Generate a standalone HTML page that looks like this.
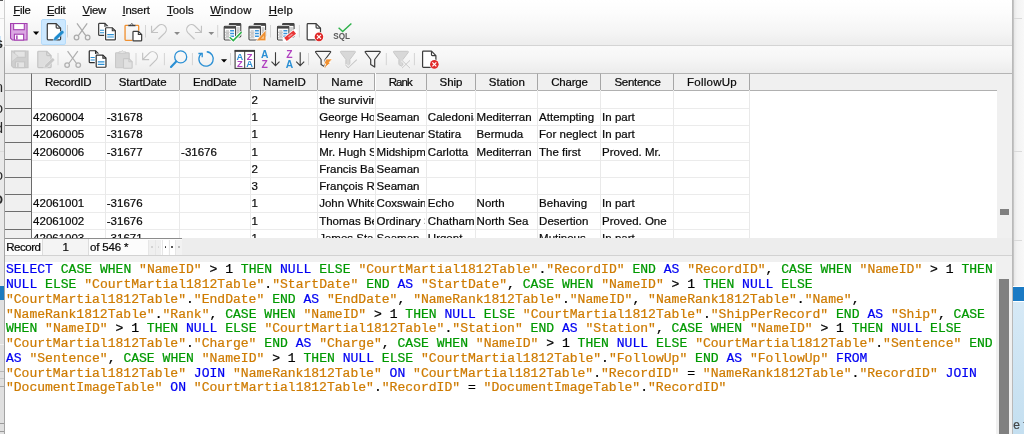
<!DOCTYPE html>
<html lang="en"><head><meta charset="utf-8"><title>Query Design</title>
<style>

html,body{margin:0;padding:0}
body{width:1024px;height:434px;overflow:hidden;position:relative;background:#fff;font-family:"Liberation Sans",sans-serif;font-size:12px;color:#0a0a0a;-webkit-text-stroke:0.22px}
div,span,svg{position:absolute;box-sizing:border-box}
.sql span,.mn u,.cell span{position:static}
#win,#lstrip,#rstrip,#tbsvg{will-change:transform}
#win{left:5px;top:0;width:1007.3px;height:434px;background:#f0f0f0;overflow:hidden}
#tb1{left:0;top:0;width:1008px;height:45px;background:linear-gradient(#ffffff,#fcfcfc 30%,#f5f5f5 70%,#ededed)}
#sep1{left:0;top:45px;width:1008px;height:1px;background:#d4d4d4}
#tb2{left:0;top:46px;width:1008px;height:27px;background:linear-gradient(#fafafa,#f6f6f6 45%,#ececec)}
.mn{top:1.5px;height:16px;line-height:16px;font-size:11.3px;white-space:nowrap;color:#111}
.mn u{text-decoration:underline;text-underline-offset:0.7px;text-decoration-thickness:1px}
.vs{width:1px;background:#d0d0d0}
#grid{left:0;top:73px;width:1008px;height:165px;background:#fff;overflow:hidden}
.hd{top:0;height:18px;background:#f0f0f0;border-top:1px solid #b4b4b4;border-bottom:1px solid #b0b0b0;border-right:1px solid #a6a6a6;font-size:11.5px;line-height:15px;white-space:nowrap}
.hd span{position:absolute;top:1.2px}
.rh{left:0;width:27px;background:#f0f0f0;border-bottom:1.2px solid #6e6e6e;border-right:1px solid #6a6a6a}
.cell{height:17.3px;line-height:17.3px;font-size:11.5px;white-space:nowrap;overflow:hidden;padding-left:1.6px}
.hl{height:1px;background:#ebebeb;left:26.5px}
.vl{width:1px;background:#e9e9e9;top:17px;height:148px}
#rec{left:0;top:238px;width:1008px;height:18.4px;background:#ededed;font-size:11.5px;line-height:18px;white-space:nowrap}
#rec span{position:absolute;top:0.1px}
#sqlp{left:0;top:261.6px;width:991px;height:173px;background:#fff;overflow:hidden}
.sql{left:0.9px;white-space:pre;font-family:"Liberation Mono",monospace;font-size:13.065px;line-height:14.75px;height:14.75px;color:#000}
.k{color:#0000f2}.i{color:#009900}.s{color:#ce7b00}

</style></head><body>
<div id="lstrip" style="left:0;top:0;width:5px;height:434px;background:#e9e9e9;overflow:hidden;font-size:16px;line-height:16px;color:#2a2a2a;white-space:nowrap">
<div style="left:0;top:0;width:5px;height:46.5px;background:#fbfbfb"></div>
<div style="left:0;top:18px;width:4px;height:1px;background:#e2e2e2"></div>
<div style="left:0;top:0;width:3px;height:1.2px;background:#555"></div>
<div style="left:0;top:35.5px;width:1.4px;height:12px;background:#cfe6f8"></div>
<span style="right:1.9px;top:34.67px;font-size:15px;font-weight:bold;line-height:16px;-webkit-text-stroke:0">s</span>
<span style="right:1.9px;top:78.67px;font-size:15px;font-weight:normal;line-height:16px;-webkit-text-stroke:0">n</span>
<span style="right:1.9px;top:100.25px;font-size:14.5px;font-weight:normal;line-height:16px;-webkit-text-stroke:0">o</span>
<span style="right:1.9px;top:119.55px;font-size:14.5px;font-weight:normal;line-height:16px;-webkit-text-stroke:0">d</span>
<span style="right:1.9px;top:166.85px;font-size:14.5px;font-weight:normal;line-height:16px;-webkit-text-stroke:0">o</span>
<span style="right:1.9px;top:192.26px;font-size:12.5px;font-weight:bold;line-height:16px;-webkit-text-stroke:0">D</span>
<span style="right:1.9px;top:353.85px;font-size:14.5px;font-weight:normal;line-height:16px;-webkit-text-stroke:0">u</span>
<div style="left:0;top:285.5px;width:4.3px;height:15.6px;background:#1a7abf"></div>
<div style="left:0;top:151px;width:4px;height:1px;background:#dcdcdc"></div>
<div style="left:0;top:300px;width:4.2px;height:134px;background:#e0e0e0"></div>
<div style="left:0;top:344.2px;width:4.2px;height:1px;background:#f2f2f2"></div>
<div style="left:0;top:371.2px;width:4.2px;height:1px;background:#b8b8b8"></div>
<div style="left:0;top:378.0px;width:4.2px;height:1px;background:#c8c8c8"></div>
<div style="left:0;top:385.6px;width:4.2px;height:1px;background:#a8a8a8"></div>
<div style="left:0;top:423.0px;width:4.2px;height:1px;background:#9a9a9a"></div>
<div style="left:0;top:430.8px;width:4.2px;height:1px;background:#9a9a9a"></div>
<div style="left:4.1px;top:46.5px;width:0.9px;height:388px;background:#a4a4a4"></div>
<div style="left:4.1px;top:0;width:0.9px;height:46.5px;background:#cfcfcf"></div>
</div>
<div id="rstrip" style="left:1012px;top:0;width:12px;height:434px;background:linear-gradient(90deg,#b9b9b9 0,#b9b9b9 1.4px,#e6e6e6 1.8px,#f3f3f3 5px,#f8f8f8 12px);overflow:hidden;font-size:12px;color:#444;white-space:nowrap">
<div style="left:1.6px;top:18px;width:8px;height:1px;background:#dadada"></div>
<div style="left:1.6px;top:151px;width:8px;height:1px;background:#dadada"></div>
<div style="left:1.6px;top:240px;width:8px;height:1px;background:#dadada"></div>
<div style="left:1px;top:285.6px;width:11px;height:16.1px;background:#1a7ac4;border-top:1px solid #fff;border-bottom:1px solid #fff"></div>
<div style="left:1px;top:301.7px;width:11px;height:133px;background:linear-gradient(#d6e9f6,#c4dff0)"></div>
<span style="left:1.2px;top:417px;line-height:16px">e f</span>
</div>
<div id="win">
<div id="tb1"></div><div id="sep1"></div><div id="tb2"></div>
<div class="mn" style="left:8.30px;letter-spacing:-0.24px"><u>F</u>ile</div>
<div class="mn" style="left:41.90px;letter-spacing:-0.28px"><u>E</u>dit</div>
<div class="mn" style="left:77.50px;letter-spacing:-0.21px"><u>V</u>iew</div>
<div class="mn" style="left:117.40px;letter-spacing:-0.14px"><u>I</u>nsert</div>
<div class="mn" style="left:161.90px;letter-spacing:0.09px"><u>T</u>ools</div>
<div class="mn" style="left:205.20px;letter-spacing:0.22px"><u>W</u>indow</div>
<div class="mn" style="left:263.75px;letter-spacing:0.27px"><u>H</u>elp</div>
<div id="grid">
<div class="hd" style="left:0;width:27px;border-right-color:#6a6a6a"></div>
<div class="hd" style="left:27.00px;width:73.70px"><span style="left:13.00px;letter-spacing:-0.29px">RecordID</span></div>
<div class="hd" style="left:100.70px;width:74.30px"><span style="left:13.05px;letter-spacing:-0.09px">StartDate</span></div>
<div class="hd" style="left:175.00px;width:70.50px"><span style="left:13.00px;letter-spacing:-0.18px">EndDate</span></div>
<div class="hd" style="left:245.50px;width:67.60px"><span style="left:12.50px;letter-spacing:0.13px">NameID</span></div>
<div class="hd" style="left:313.10px;width:57.40px"><span style="left:13.15px;letter-spacing:0.32px">Name</span></div>
<div class="hd" style="left:370.50px;width:51.25px"><span style="left:13.25px;letter-spacing:-0.95px">Rank</span></div>
<div class="hd" style="left:421.75px;width:48.75px"><span style="left:12.75px;letter-spacing:-0.04px">Ship</span></div>
<div class="hd" style="left:470.50px;width:62.50px"><span style="left:13.25px;letter-spacing:0.06px">Station</span></div>
<div class="hd" style="left:533.00px;width:63.00px"><span style="left:13.25px;letter-spacing:-0.21px">Charge</span></div>
<div class="hd" style="left:596.00px;width:73.25px"><span style="left:13.50px;letter-spacing:-0.31px">Sentence</span></div>
<div class="hd" style="left:669.25px;width:75.75px"><span style="left:12.75px;letter-spacing:0.24px">FollowUp</span></div>
<div class="hd" style="left:745.00px;width:263.50px;border-right:none"></div>
<div class="rh" style="top:18.30px;height:17.28px"></div>
<div class="hl" style="top:34.88px;width:718.50px"></div>
<div class="cell" style="left:245.00px;top:18.70px;width:66.80px">2</div>
<div class="cell" style="left:312.60px;top:18.70px;width:56.60px">the surviving</div>
<div class="rh" style="top:35.58px;height:17.28px"></div>
<div class="hl" style="top:52.16px;width:718.50px"></div>
<div class="cell" style="left:26.50px;top:35.98px;width:72.90px">42060004</div>
<div class="cell" style="left:100.20px;top:35.98px;width:73.50px">-31678</div>
<div class="cell" style="left:245.00px;top:35.98px;width:66.80px">1</div>
<div class="cell" style="left:312.60px;top:35.98px;width:56.60px">George Hoyle</div>
<div class="cell" style="left:370.00px;top:35.98px;width:50.45px">Seaman</div>
<div class="cell" style="left:421.25px;top:35.98px;width:47.95px">Caledonia</div>
<div class="cell" style="left:470.00px;top:35.98px;width:61.70px">Mediterran</div>
<div class="cell" style="left:532.50px;top:35.98px;width:62.20px">Attempting</div>
<div class="cell" style="left:595.50px;top:35.98px;width:72.45px">In part</div>
<div class="rh" style="top:52.86px;height:17.28px"></div>
<div class="hl" style="top:69.44px;width:718.50px"></div>
<div class="cell" style="left:26.50px;top:53.26px;width:72.90px">42060005</div>
<div class="cell" style="left:100.20px;top:53.26px;width:73.50px">-31678</div>
<div class="cell" style="left:245.00px;top:53.26px;width:66.80px">1</div>
<div class="cell" style="left:312.60px;top:53.26px;width:56.60px">Henry Harrison</div>
<div class="cell" style="left:370.00px;top:53.26px;width:50.45px">Lieutenant</div>
<div class="cell" style="left:421.25px;top:53.26px;width:47.95px">Statira</div>
<div class="cell" style="left:470.00px;top:53.26px;width:61.70px">Bermuda</div>
<div class="cell" style="left:532.50px;top:53.26px;width:62.20px">For neglect</div>
<div class="cell" style="left:595.50px;top:53.26px;width:72.45px">In part</div>
<div class="rh" style="top:70.14px;height:17.28px"></div>
<div class="hl" style="top:86.72px;width:718.50px"></div>
<div class="cell" style="left:26.50px;top:70.54px;width:72.90px">42060006</div>
<div class="cell" style="left:100.20px;top:70.54px;width:73.50px">-31677</div>
<div class="cell" style="left:174.50px;top:70.54px;width:69.70px">-31676</div>
<div class="cell" style="left:245.00px;top:70.54px;width:66.80px">1</div>
<div class="cell" style="left:312.60px;top:70.54px;width:56.60px">Mr. Hugh Stewart</div>
<div class="cell" style="left:370.00px;top:70.54px;width:50.45px">Midshipman</div>
<div class="cell" style="left:421.25px;top:70.54px;width:47.95px">Carlotta</div>
<div class="cell" style="left:470.00px;top:70.54px;width:61.70px">Mediterran</div>
<div class="cell" style="left:532.50px;top:70.54px;width:62.20px">The first</div>
<div class="cell" style="left:595.50px;top:70.54px;width:72.45px">Proved. Mr.</div>
<div class="rh" style="top:87.42px;height:17.28px"></div>
<div class="hl" style="top:104.00px;width:718.50px"></div>
<div class="cell" style="left:245.00px;top:87.82px;width:66.80px">2</div>
<div class="cell" style="left:312.60px;top:87.82px;width:56.60px">Francis Bayley</div>
<div class="cell" style="left:370.00px;top:87.82px;width:50.45px">Seaman</div>
<div class="rh" style="top:104.70px;height:17.28px"></div>
<div class="hl" style="top:121.28px;width:718.50px"></div>
<div class="cell" style="left:245.00px;top:105.10px;width:66.80px">3</div>
<div class="cell" style="left:312.60px;top:105.10px;width:56.60px">François Rivet</div>
<div class="cell" style="left:370.00px;top:105.10px;width:50.45px">Seaman</div>
<div class="rh" style="top:121.98px;height:17.28px"></div>
<div class="hl" style="top:138.56px;width:718.50px"></div>
<div class="cell" style="left:26.50px;top:122.38px;width:72.90px">42061001</div>
<div class="cell" style="left:100.20px;top:122.38px;width:73.50px">-31676</div>
<div class="cell" style="left:245.00px;top:122.38px;width:66.80px">1</div>
<div class="cell" style="left:312.60px;top:122.38px;width:56.60px">John White</div>
<div class="cell" style="left:370.00px;top:122.38px;width:50.45px">Coxswain</div>
<div class="cell" style="left:421.25px;top:122.38px;width:47.95px">Echo</div>
<div class="cell" style="left:470.00px;top:122.38px;width:61.70px">North</div>
<div class="cell" style="left:532.50px;top:122.38px;width:62.20px">Behaving</div>
<div class="cell" style="left:595.50px;top:122.38px;width:72.45px">In part</div>
<div class="rh" style="top:139.26px;height:17.28px"></div>
<div class="hl" style="top:155.84px;width:718.50px"></div>
<div class="cell" style="left:26.50px;top:139.66px;width:72.90px">42061002</div>
<div class="cell" style="left:100.20px;top:139.66px;width:73.50px">-31676</div>
<div class="cell" style="left:245.00px;top:139.66px;width:66.80px">1</div>
<div class="cell" style="left:312.60px;top:139.66px;width:56.60px">Thomas Bell</div>
<div class="cell" style="left:370.00px;top:139.66px;width:50.45px">Ordinary Seaman</div>
<div class="cell" style="left:421.25px;top:139.66px;width:47.95px">Chatham</div>
<div class="cell" style="left:470.00px;top:139.66px;width:61.70px">North Sea</div>
<div class="cell" style="left:532.50px;top:139.66px;width:62.20px">Desertion</div>
<div class="cell" style="left:595.50px;top:139.66px;width:72.45px">Proved. One</div>
<div class="rh" style="top:156.54px;height:17.28px"></div>
<div class="hl" style="top:173.12px;width:718.50px"></div>
<div class="cell" style="left:26.50px;top:156.94px;width:72.90px">42061003</div>
<div class="cell" style="left:100.20px;top:156.94px;width:73.50px">-31671</div>
<div class="cell" style="left:245.00px;top:156.94px;width:66.80px">1</div>
<div class="cell" style="left:312.60px;top:156.94px;width:56.60px">James Stacey</div>
<div class="cell" style="left:370.00px;top:156.94px;width:50.45px">Seaman</div>
<div class="cell" style="left:421.25px;top:156.94px;width:47.95px">Urgent</div>
<div class="cell" style="left:532.50px;top:156.94px;width:62.20px">Mutinous</div>
<div class="cell" style="left:595.50px;top:156.94px;width:72.45px">In part</div>
<div class="vl" style="left:99.90px"></div>
<div class="vl" style="left:174.20px"></div>
<div class="vl" style="left:244.70px"></div>
<div class="vl" style="left:312.30px"></div>
<div class="vl" style="left:369.70px"></div>
<div class="vl" style="left:420.95px"></div>
<div class="vl" style="left:469.70px"></div>
<div class="vl" style="left:532.20px"></div>
<div class="vl" style="left:595.20px"></div>
<div class="vl" style="left:668.45px"></div>
<div class="vl" style="left:744.20px"></div>
<div style="left:991.5px;top:17px;width:17px;height:148px;background:#f0f0f0"></div>
<div style="left:994.6px;top:135.7px;width:9.4px;height:6.6px;background:#808080"></div>
</div>
<div id="rec">
<div style="left:0;top:0;width:177px;height:17.6px;background:#fcfcfc;border-top:1px solid #8c8c8c"></div>
<div style="left:36.5px;top:1px;width:47.5px;height:16.4px;background:#f4f4f4;border-left:1px solid #dcdcdc;border-right:1px solid #dcdcdc"></div>
<span style="left:1.25px;letter-spacing:-0.47px">Record</span>
<span style="left:57.6px">1</span>
<span style="left:85.00px;letter-spacing:-0.17px">of 546 *</span>
<div style="left:143.40px;top:1.5px;width:6.2px;height:15.5px;background:#efefef;border-left:1px solid #e6e6e6"></div>
<div style="left:146.00px;top:8.4px;width:1.6px;height:1.6px;background:#c8c8c8;border-radius:1px"></div>
<div style="left:150.15px;top:1.5px;width:6.2px;height:15.5px;background:#efefef;border-left:1px solid #e6e6e6"></div>
<div style="left:152.75px;top:8.4px;width:1.6px;height:1.6px;background:#d4d4d4;border-radius:1px"></div>
<div style="left:156.90px;top:1.5px;width:6.2px;height:15.5px;background:#ffffff;border-left:1px solid #e6e6e6"></div>
<div style="left:159.50px;top:8.4px;width:1.6px;height:1.6px;background:#222;border-radius:1px"></div>
<div style="left:163.65px;top:1.5px;width:6.2px;height:15.5px;background:#ffffff;border-left:1px solid #e6e6e6"></div>
<div style="left:166.25px;top:8.4px;width:1.6px;height:1.6px;background:#222;border-radius:1px"></div>
<div style="left:170.40px;top:1.5px;width:6.2px;height:15.5px;background:#f2f2f2;border-left:1px solid #e6e6e6"></div>
<div style="left:173.00px;top:8.4px;width:1.6px;height:1.6px;background:#aaa;border-radius:1px"></div>
<div style="left:0;top:17.2px;width:1008px;height:1px;background:#d2d2d2"></div>
</div>
<div id="sqlp">
<div class="sql" style="top:1.70px"><span class="k">SELECT</span> <span class="i">CASE</span> <span class="i">WHEN</span> <span class="s">"NameID"</span> &gt; 1 <span class="i">THEN</span> <span class="k">NULL</span> <span class="i">ELSE</span> <span class="s">"CourtMartial1812Table"</span>.<span class="s">"RecordID"</span> <span class="i">END</span> <span class="k">AS</span> <span class="s">"RecordID"</span>, <span class="i">CASE</span> <span class="i">WHEN</span> <span class="s">"NameID"</span> &gt; 1 <span class="i">THEN</span></div>
<div class="sql" style="top:16.45px"><span class="k">NULL</span> <span class="i">ELSE</span> <span class="s">"CourtMartial1812Table"</span>.<span class="s">"StartDate"</span> <span class="i">END</span> <span class="k">AS</span> <span class="s">"StartDate"</span>, <span class="i">CASE</span> <span class="i">WHEN</span> <span class="s">"NameID"</span> &gt; 1 <span class="i">THEN</span> <span class="k">NULL</span> <span class="i">ELSE</span></div>
<div class="sql" style="top:31.20px"><span class="s">"CourtMartial1812Table"</span>.<span class="s">"EndDate"</span> <span class="i">END</span> <span class="k">AS</span> <span class="s">"EndDate"</span>, <span class="s">"NameRank1812Table"</span>.<span class="s">"NameID"</span>, <span class="s">"NameRank1812Table"</span>.<span class="s">"Name"</span>,</div>
<div class="sql" style="top:45.95px"><span class="s">"NameRank1812Table"</span>.<span class="s">"Rank"</span>, <span class="i">CASE</span> <span class="i">WHEN</span> <span class="s">"NameID"</span> &gt; 1 <span class="i">THEN</span> <span class="k">NULL</span> <span class="i">ELSE</span> <span class="s">"CourtMartial1812Table"</span>.<span class="s">"ShipPerRecord"</span> <span class="i">END</span> <span class="k">AS</span> <span class="s">"Ship"</span>, <span class="i">CASE</span></div>
<div class="sql" style="top:60.70px"><span class="i">WHEN</span> <span class="s">"NameID"</span> &gt; 1 <span class="i">THEN</span> <span class="k">NULL</span> <span class="i">ELSE</span> <span class="s">"CourtMartial1812Table"</span>.<span class="s">"Station"</span> <span class="i">END</span> <span class="k">AS</span> <span class="s">"Station"</span>, <span class="i">CASE</span> <span class="i">WHEN</span> <span class="s">"NameID"</span> &gt; 1 <span class="i">THEN</span> <span class="k">NULL</span> <span class="i">ELSE</span></div>
<div class="sql" style="top:75.45px"><span class="s">"CourtMartial1812Table"</span>.<span class="s">"Charge"</span> <span class="i">END</span> <span class="k">AS</span> <span class="s">"Charge"</span>, <span class="i">CASE</span> <span class="i">WHEN</span> <span class="s">"NameID"</span> &gt; 1 <span class="i">THEN</span> <span class="k">NULL</span> <span class="i">ELSE</span> <span class="s">"CourtMartial1812Table"</span>.<span class="s">"Sentence"</span> <span class="i">END</span></div>
<div class="sql" style="top:90.20px"><span class="k">AS</span> <span class="s">"Sentence"</span>, <span class="i">CASE</span> <span class="i">WHEN</span> <span class="s">"NameID"</span> &gt; 1 <span class="i">THEN</span> <span class="k">NULL</span> <span class="i">ELSE</span> <span class="s">"CourtMartial1812Table"</span>.<span class="s">"FollowUp"</span> <span class="i">END</span> <span class="k">AS</span> <span class="s">"FollowUp"</span> <span class="k">FROM</span></div>
<div class="sql" style="top:104.95px"><span class="s">"CourtMartial1812Table"</span> <span class="k">JOIN</span> <span class="s">"NameRank1812Table"</span> <span class="k">ON</span> <span class="s">"CourtMartial1812Table"</span>.<span class="s">"RecordID"</span> = <span class="s">"NameRank1812Table"</span>.<span class="s">"RecordID"</span> <span class="k">JOIN</span></div>
<div class="sql" style="top:119.70px"><span class="s">"DocumentImageTable"</span> <span class="k">ON</span> <span class="s">"CourtMartial1812Table"</span>.<span class="s">"RecordID"</span> = <span class="s">"DocumentImageTable"</span>.<span class="s">"RecordID"</span></div>
</div>
<div style="left:991px;top:261.6px;width:17px;height:173px;background:#f0f0f0"></div>
<div style="left:994px;top:278.75px;width:10px;height:156px;background:#808080"></div>
</div>
<div style="left:41.2px;top:19.2px;width:24.9px;height:25.9px;background:#cce8ff;border:1px solid #b5dcfb;border-radius:2px"></div>
<svg id="tbsvg" style="left:0;top:0" width="1024" height="73" viewBox="0 0 1024 73">
<g transform="translate(10.00 23.00) scale(1.100)"><path d="M0.5 0.5H15.5V15.5H2.2L0.5 13.8Z" fill="#dba8e3" stroke="#a33fb0"/><rect x="3.3" y="0.5" width="9.7" height="5.6" fill="#fff" stroke="#a33fb0"/><rect x="4" y="10.2" width="8.4" height="5.3" fill="#fff" stroke="#a33fb0"/><rect x="5.6" y="11.3" width="1.3" height="3.7" fill="#a33fb0"/></g>
<path d="M33.00 31.50H39.20L36.10 34.90Z" fill="#000"/>
<g transform="translate(46.30 23.00) scale(1.100)"><path d="M1.6 0.6H9L13 4.6V14.6Q13 15.4 12.2 15.4H1.6Q0.9 15.4 0.9 14.6V1.4Q0.9 0.6 1.6 0.6Z" fill="#fff" stroke="#3c3c3c" stroke-width="1.1" stroke-linejoin="round"/><path d="M9 0.6V3.8Q9 4.6 9.8 4.6H13" fill="none" stroke="#3c3c3c" stroke-width="1.1"/><path d="M6.3 16.3L7.2 13.1L13.9 6.9Q14.5 6.4 15.1 7L15.9 7.8Q16.5 8.4 15.9 9L9.4 15.4Z" fill="#1e8bcd" stroke="#cfe8fb" stroke-width="0.5"/></g>
<path d="M67.50 25.00V37.50" stroke="#d4d4d4" stroke-width="1"/>
<g transform="translate(74.00 23.00) scale(1.100)"><g fill="none" stroke="#ababab" stroke-width="1.15"><path d="M2.7 0.4L10.7 11.5M12 0.4L4 11.5"/><circle cx="2.3" cy="13.2" r="2.1"/><circle cx="12.4" cy="13.2" r="2.1"/></g></g>
<g transform="translate(98.00 22.90) scale(1.100)"><path d="M1.2 0.5H6.3L9 3.2V10.6Q9 11.3 8.3 11.3H1.2Q0.6 11.3 0.6 10.6V1.1Q0.6 0.5 1.2 0.5Z" fill="#fff" stroke="#3c3c3c" stroke-width="1.1"/><path d="M6.3 0.5V3.2H9" fill="none" stroke="#3c3c3c" stroke-width="1"/><path d="M1.8 6.7H6M1.8 8.9H6" stroke="#2a8fd4" stroke-width="1"/><path d="M7.6 4.4H13L15.8 7.2V14.8Q15.8 15.5 15.1 15.5H7.6Q6.9 15.5 6.9 14.8V5.1Q6.9 4.4 7.6 4.4Z" fill="#fff" stroke="#fff" stroke-width="2.6"/><path d="M7.6 4.4H13L15.8 7.2V14.8Q15.8 15.5 15.1 15.5H7.6Q6.9 15.5 6.9 14.8V5.1Q6.9 4.4 7.6 4.4Z" fill="#fff" stroke="#3c3c3c" stroke-width="1.1"/><path d="M13 4.4V7.2H15.8" fill="none" stroke="#3c3c3c" stroke-width="1"/><path d="M8.4 10.6H14.4M8.4 12.8H14.4" stroke="#2a8fd4" stroke-width="1.1"/></g>
<g transform="translate(124.50 23.00) scale(1.100)"><path d="M3.4 2.2H1.2Q0.5 2.2 0.5 2.9V15.1Q0.5 15.8 1.2 15.8H7.2M9.8 2.2H12.2Q12.9 2.2 12.9 2.9V7" fill="none" stroke="#f09030" stroke-width="1.2"/><path d="M3.4 2.9V1.5H5.2L6.7 0L8.2 1.5H10V2.9Z" fill="#3c3c3c"/><circle cx="6.7" cy="1.4" r="0.55" fill="#fff"/><path d="M8.4 7.6H12.6L15.6 10.4V15.6Q15.6 16.3 14.9 16.3H8.4Q7.7 16.3 7.7 15.6V8.3Q7.7 7.6 8.4 7.6Z" fill="#fff" stroke="#3c3c3c" stroke-width="1.1"/><path d="M12.6 7.6V10.4H15.6" fill="none" stroke="#3c3c3c" stroke-width="1"/></g>
<path d="M145.50 25.00V37.50" stroke="#d4d4d4" stroke-width="1"/>
<g transform="translate(151.00 23.00) scale(1.100)"><path d="M0.5 2.5V8.6H6.4M0.5 8.6L6.7 2.5A4.4 4.4 0 0 1 12.9 8.7L6.8 14.8" fill="none" stroke="#c2c2c2" stroke-width="1.05"/></g>
<path d="M174.10 31.90H180.00L177.05 34.90Z" fill="#8a8a8a"/>
<g transform="translate(185.50 23.00) scale(1.100)"><path d="M14.5 2.5V8.6H8.6M14.5 8.6L8.3 2.5A4.4 4.4 0 0 0 2.1 8.7L8.2 14.8" fill="none" stroke="#c2c2c2" stroke-width="1.05"/></g>
<path d="M208.40 31.90H214.20L211.30 34.90Z" fill="#8a8a8a"/>
<path d="M217.70 25.00V37.50" stroke="#d4d4d4" stroke-width="1"/>
<g transform="translate(223.50 23.00) scale(1.100)"><rect x="5.3" y="0.5" width="10.4" height="12.2" rx="0.8" fill="#fff" stroke="#444" stroke-width="1"/><rect x="5.3" y="0.5" width="10.4" height="2.1" fill="#444"/><path d="M11.8 4.4H14.6M11.8 6.6H14.6M11.8 8.8H14.6" stroke="#c4c4c4" stroke-width="1.2"/><path d="M11.2 5.5H15.4M11.2 7.7H15.4M11.2 9.9H15.4" stroke="#9a9a9a" stroke-width="0.45"/><rect x="0.6" y="3" width="10.4" height="12.4" rx="0.8" fill="#fff" stroke="#fff" stroke-width="2.2"/><rect x="0.6" y="3" width="10.4" height="12.4" rx="0.8" fill="#fff" stroke="#444" stroke-width="1"/><rect x="0.6" y="3" width="10.4" height="2.1" fill="#444"/><path d="M2.2 7.1H5M2.2 9.6H5M2.2 12.1H5" stroke="#c4c4c4" stroke-width="1.2"/><path d="M6 7.1H9.6M6 9.6H9.6M6 12.1H9.6" stroke="#3b96dc" stroke-width="1.4"/><path d="M1 8.4H5.6M1 10.9H5.6M1 13.5H5.6" stroke="#777" stroke-width="0.5"/><path d="M5.6 13L8.9 16L16.4 8.3" fill="none" stroke="#fff" stroke-width="3"/><path d="M5.6 13L8.9 16L16.4 8.3" fill="none" stroke="#2eb14a" stroke-width="1.35"/></g>
<g transform="translate(248.30 23.00) scale(1.100)"><rect x="5.3" y="0.5" width="10.4" height="12.2" rx="0.8" fill="#fff" stroke="#444" stroke-width="1"/><rect x="5.3" y="0.5" width="10.4" height="2.1" fill="#444"/><path d="M11.8 4.4H14.6M11.8 6.6H14.6M11.8 8.8H14.6" stroke="#c4c4c4" stroke-width="1.2"/><path d="M11.2 5.5H15.4M11.2 7.7H15.4M11.2 9.9H15.4" stroke="#9a9a9a" stroke-width="0.45"/><rect x="0.6" y="3" width="10.4" height="12.4" rx="0.8" fill="#fff" stroke="#fff" stroke-width="2.2"/><rect x="0.6" y="3" width="10.4" height="12.4" rx="0.8" fill="#fff" stroke="#444" stroke-width="1"/><rect x="0.6" y="3" width="10.4" height="2.1" fill="#444"/><path d="M2.2 7.1H5M2.2 9.6H5M2.2 12.1H5" stroke="#c4c4c4" stroke-width="1.2"/><path d="M6 7.1H9.6M6 9.6H9.6M6 12.1H9.6" stroke="#3b96dc" stroke-width="1.4"/><path d="M1 8.4H5.6M1 10.9H5.6M1 13.5H5.6" stroke="#777" stroke-width="0.5"/><path d="M7 16.2H16V6.4Z" fill="#f09030" stroke="#fff" stroke-width="0.6"/><path d="M11.4 14.4H14.2V11.4Z" fill="#f8c890"/></g>
<path d="M270.50 25.00V37.50" stroke="#d4d4d4" stroke-width="1"/>
<g transform="translate(276.80 23.00) scale(1.100)"><rect x="5.3" y="0.5" width="10.4" height="12.2" rx="0.8" fill="#fff" stroke="#444" stroke-width="1"/><rect x="5.3" y="0.5" width="10.4" height="2.1" fill="#444"/><path d="M11.8 4.4H14.6M11.8 6.6H14.6M11.8 8.8H14.6" stroke="#c4c4c4" stroke-width="1.2"/><path d="M11.2 5.5H15.4M11.2 7.7H15.4M11.2 9.9H15.4" stroke="#9a9a9a" stroke-width="0.45"/><rect x="0.6" y="3" width="10.4" height="12.4" rx="0.8" fill="#fff" stroke="#fff" stroke-width="2.2"/><rect x="0.6" y="3" width="10.4" height="12.4" rx="0.8" fill="#fff" stroke="#444" stroke-width="1"/><rect x="0.6" y="3" width="10.4" height="2.1" fill="#444"/><path d="M2.2 7.1H5M2.2 9.6H5M2.2 12.1H5" stroke="#c4c4c4" stroke-width="1.2"/><path d="M6 7.1H9.6M6 9.6H9.6M6 12.1H9.6" stroke="#3b96dc" stroke-width="1.4"/><path d="M1 8.4H5.6M1 10.9H5.6M1 13.5H5.6" stroke="#777" stroke-width="0.5"/><path d="M7.9 14.9L16.3 8.3" stroke="#fff" stroke-width="5.2" stroke-linecap="round"/><path d="M7.9 14.9L16.3 8.3" stroke="#e83434" stroke-width="3.8"/><path d="M10.6 12.9L14.2 10" stroke="#f29090" stroke-width="1.4"/></g>
<path d="M299.40 25.00V37.50" stroke="#d4d4d4" stroke-width="1"/>
<g transform="translate(306.20 23.00) scale(1.100)"><path d="M1.6 0.6H9L13 4.6V14.6Q13 15.4 12.2 15.4H1.6Q0.9 15.4 0.9 14.6V1.4Q0.9 0.6 1.6 0.6Z" fill="#fff" stroke="#3c3c3c" stroke-width="1.1" stroke-linejoin="round"/><path d="M9 0.6V3.8Q9 4.6 9.8 4.6H13" fill="none" stroke="#3c3c3c" stroke-width="1.1"/><circle cx="11.6" cy="12.6" r="4.5" fill="#fff"/><circle cx="11.6" cy="12.6" r="3.9" fill="#e02828"/><path d="M9.8 10.8L13.4 14.4M13.4 10.8L9.8 14.4" stroke="#fff" stroke-width="1.1"/></g>
<text x="333.30" y="38.70" font-family="Liberation Sans, sans-serif" font-size="9.6" font-weight="bold" fill="#5a5a5a" textLength="16.8" lengthAdjust="spacingAndGlyphs">SQL</text><path d="M338.60 27.80L342.70 31.60L351.40 23.40" fill="none" stroke="#2eb14a" stroke-width="1.4"/>
<g transform="translate(11.00 50.60) scale(1.100)"><path d="M0.5 0.5H15.5V15.5H2.2L0.5 13.8Z" fill="#cfcfcf" stroke="#c6c6c6"/><rect x="3.3" y="0.5" width="9.7" height="5.6" fill="#e4e4e4" stroke="#c6c6c6"/><path d="M0.6 0.6L6.6 5.2L0.6 10.2Z" fill="#dedede" stroke="#c6c6c6" stroke-width="0.6"/><rect x="4" y="10.2" width="8.4" height="5.3" fill="#e4e4e4" stroke="#c6c6c6"/><rect x="5.6" y="11.3" width="1.3" height="3.7" fill="#c6c6c6"/></g>
<g transform="translate(36.80 50.60) scale(1.100)"><path d="M1.6 0.6H9L13 4.6V14.6Q13 15.4 12.2 15.4H1.6Q0.9 15.4 0.9 14.6V1.4Q0.9 0.6 1.6 0.6Z" fill="#dedede" stroke="#c4c4c4" stroke-width="1.1" stroke-linejoin="round"/><path d="M9 0.6V3.8Q9 4.6 9.8 4.6H13" fill="none" stroke="#c4c4c4" stroke-width="1.1"/><path d="M6.3 16.3L7.2 13.1L13.9 6.9Q14.5 6.4 15.1 7L15.9 7.8Q16.5 8.4 15.9 9L9.4 15.4Z" fill="#c8c8c8" stroke="#eee" stroke-width="0.5"/></g>
<path d="M58.00 53.00V65.20" stroke="#d4d4d4" stroke-width="1"/>
<g transform="translate(64.60 50.60) scale(1.100)"><g fill="none" stroke="#b0b0b0" stroke-width="1.15"><path d="M2.7 0.4L10.7 11.5M12 0.4L4 11.5"/><circle cx="2.3" cy="13.2" r="2.1"/><circle cx="12.4" cy="13.2" r="2.1"/></g></g>
<g transform="translate(88.60 50.20) scale(1.100)"><path d="M1.2 0.5H6.3L9 3.2V10.6Q9 11.3 8.3 11.3H1.2Q0.6 11.3 0.6 10.6V1.1Q0.6 0.5 1.2 0.5Z" fill="#fff" stroke="#2c2c2c" stroke-width="1.1"/><path d="M6.3 0.5V3.2H9" fill="none" stroke="#2c2c2c" stroke-width="1"/><path d="M1.8 6.7H6M1.8 8.9H6" stroke="#2a8fd4" stroke-width="1"/><path d="M7.6 4.4H13L15.8 7.2V14.8Q15.8 15.5 15.1 15.5H7.6Q6.9 15.5 6.9 14.8V5.1Q6.9 4.4 7.6 4.4Z" fill="#fff" stroke="#fff" stroke-width="2.6"/><path d="M7.6 4.4H13L15.8 7.2V14.8Q15.8 15.5 15.1 15.5H7.6Q6.9 15.5 6.9 14.8V5.1Q6.9 4.4 7.6 4.4Z" fill="#fff" stroke="#2c2c2c" stroke-width="1.1"/><path d="M13 4.4V7.2H15.8" fill="none" stroke="#2c2c2c" stroke-width="1"/><path d="M8.4 10.6H14.4M8.4 12.8H14.4" stroke="#2a8fd4" stroke-width="1.1"/></g>
<g transform="translate(115.00 50.30) scale(1.100)"><path d="M1.2 2.2H12.2Q12.9 2.2 12.9 2.9V15.1Q12.9 15.8 12.2 15.8H1.2Q0.5 15.8 0.5 15.1V2.9Q0.5 2.2 1.2 2.2Z" fill="#d6d6d6" stroke="#c8c8c8" stroke-width="1"/><path d="M3.6 2.8V1.4H5.4L6.6 0.2L7.8 1.4H9.6V2.8Z" fill="#e8e8e8" stroke="#c8c8c8" stroke-width="0.8"/><path d="M8.4 7.6H12.6L15.6 10.4V15.6Q15.6 16.3 14.9 16.3H8.4Q7.7 16.3 7.7 15.6V8.3Q7.7 7.6 8.4 7.6Z" fill="#e2e2e2" stroke="#c8c8c8" stroke-width="1"/><path d="M12.6 7.6V10.4H15.6" fill="none" stroke="#c8c8c8" stroke-width="0.9"/></g>
<path d="M136.00 53.00V65.20" stroke="#d4d4d4" stroke-width="1"/>
<g transform="translate(142.10 50.10) scale(1.100)"><path d="M0.5 2.5V8.6H6.4M0.5 8.6L6.7 2.5A4.4 4.4 0 0 1 12.9 8.7L6.8 14.8" fill="none" stroke="#c2c2c2" stroke-width="1.05"/></g>
<path d="M164.40 53.00V65.20" stroke="#d4d4d4" stroke-width="1"/>
<circle cx="180.70" cy="56.90" r="6" fill="none" stroke="#2a8fd4" stroke-width="1.3"/><path d="M176.20 61.50L171.00 66.90" stroke="#2a8fd4" stroke-width="2.1" stroke-linecap="round"/>
<path d="M192.40 53.00V65.20" stroke="#d4d4d4" stroke-width="1"/>
<path d="M206.73 51.73A7.20 7.20 0 1 1 201.77 53.15" fill="none" stroke="#2a8fd4" stroke-width="1.3"/><path d="M198.40 53.50H202.20V57.30" fill="none" stroke="#2a8fd4" stroke-width="1.3"/>
<path d="M221.00 59.30H227.10L224.05 62.60Z" fill="#000"/>
<path d="M230.50 53.00V65.20" stroke="#d4d4d4" stroke-width="1"/>
<rect x="235.10" y="50.80" width="19.4" height="17.6" fill="#fff" stroke="#3c3c3c" stroke-width="1.1"/><rect x="234.60" y="49.90" width="20.4" height="1.9" fill="#3c3c3c"/><path d="M244.70 50.90V68.40" stroke="#3c3c3c" stroke-width="1"/><text x="239.90" y="59.90" font-family="Liberation Sans, sans-serif" font-size="9.30" font-weight="bold" fill="#2a8fd4" text-anchor="middle">A</text><text x="239.90" y="67.10" font-family="Liberation Sans, sans-serif" font-size="9.30" font-weight="bold" fill="#b040c0" text-anchor="middle">Z</text><text x="249.70" y="59.90" font-family="Liberation Sans, sans-serif" font-size="9.30" font-weight="bold" fill="#b040c0" text-anchor="middle">Z</text><text x="249.70" y="67.10" font-family="Liberation Sans, sans-serif" font-size="9.30" font-weight="bold" fill="#2a8fd4" text-anchor="middle">A</text>
<text x="264.70" y="58.20" font-family="Liberation Sans, sans-serif" font-size="10.30" font-weight="bold" fill="#2a8fd4" text-anchor="middle">A</text><text x="264.70" y="67.50" font-family="Liberation Sans, sans-serif" font-size="10.30" font-weight="bold" fill="#b040c0" text-anchor="middle">Z</text><path d="M275.50 52.30V65.50M271.50 61.60L275.50 65.60L279.50 61.60" fill="none" stroke="#3c3c3c" stroke-width="1.1"/>
<text x="289.40" y="58.20" font-family="Liberation Sans, sans-serif" font-size="10.30" font-weight="bold" fill="#b040c0" text-anchor="middle">Z</text><text x="289.40" y="67.50" font-family="Liberation Sans, sans-serif" font-size="10.30" font-weight="bold" fill="#2a8fd4" text-anchor="middle">A</text><path d="M300.20 52.30V65.50M296.20 61.60L300.20 65.60L304.20 61.60" fill="none" stroke="#3c3c3c" stroke-width="1.1"/>
<path d="M308.50 53.00V65.20" stroke="#d4d4d4" stroke-width="1"/>
<path d="M316.40 51.30H329.80Q331.10 51.30 330.40 52.50L325.10 59.50V67.10L321.10 64.50V59.50L315.80 52.50Q315.10 51.30 316.40 51.30Z" fill="none" stroke="#3c3c3c" stroke-width="1.2" stroke-linejoin="round"/><path d="M326.20 58.90L332.40 58.90L329.20 62.50L331.00 62.50L323.00 69.30L325.80 63.90L323.80 63.90Z" fill="#f09030" stroke="#fff" stroke-width="0.8"/>
<path d="M341.20 51.30H354.60Q355.90 51.30 355.20 52.50L349.90 59.50V67.10L345.90 64.50V59.50L340.60 52.50Q339.90 51.30 341.20 51.30Z" fill="#d8d8d8" stroke="#c8c8c8" stroke-width="1" stroke-linejoin="round"/><path d="M345.60 65.00L348.20 67.80L356.80 59.60" fill="none" stroke="#f4f4f4" stroke-width="2.6"/><path d="M345.60 65.00L348.20 67.80L356.80 59.60" fill="none" stroke="#c8c8c8" stroke-width="1.1"/>
<path d="M366.00 51.30H379.40Q380.70 51.30 380.00 52.50L374.70 59.50V67.10L370.70 64.50V59.50L365.40 52.50Q364.70 51.30 366.00 51.30Z" fill="none" stroke="#3c3c3c" stroke-width="1.2" stroke-linejoin="round"/>
<path d="M386.30 53.00V65.20" stroke="#d4d4d4" stroke-width="1"/>
<path d="M394.20 51.30H407.60Q408.90 51.30 408.20 52.50L402.90 59.50V67.10L398.90 64.50V59.50L393.60 52.50Q392.90 51.30 394.20 51.30Z" fill="#d8d8d8" stroke="#c8c8c8" stroke-width="1" stroke-linejoin="round"/><path d="M402.00 60.40L410.00 68.20M410.00 60.40L402.00 68.20" fill="none" stroke="#f4f4f4" stroke-width="2.4"/><path d="M402.00 60.40L410.00 68.20M410.00 60.40L402.00 68.20" fill="none" stroke="#c8c8c8" stroke-width="1"/>
<path d="M414.40 53.00V65.20" stroke="#d4d4d4" stroke-width="1"/>
<g transform="translate(421.60 50.50) scale(1.100)"><path d="M1.6 0.6H9L13 4.6V14.6Q13 15.4 12.2 15.4H1.6Q0.9 15.4 0.9 14.6V1.4Q0.9 0.6 1.6 0.6Z" fill="#fff" stroke="#3c3c3c" stroke-width="1.1" stroke-linejoin="round"/><path d="M9 0.6V3.8Q9 4.6 9.8 4.6H13" fill="none" stroke="#3c3c3c" stroke-width="1.1"/><circle cx="11.6" cy="12.6" r="4.5" fill="#fff"/><circle cx="11.6" cy="12.6" r="3.9" fill="#e02828"/><path d="M9.8 10.8L13.4 14.4M13.4 10.8L9.8 14.4" stroke="#fff" stroke-width="1.1"/></g>
</svg>
</body></html>
